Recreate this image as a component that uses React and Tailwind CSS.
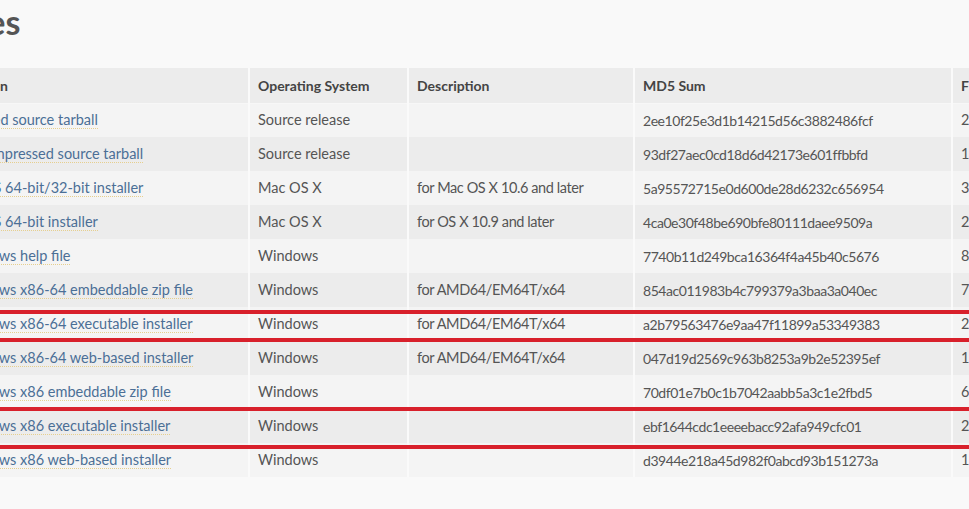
import React from 'react';

const rows = [
    ['Gzipped source tarball', 'Source release', '', '2ee10f25e3d1b14215d56c3882486fcf', '22973527'],
    ['XZ compressed source tarball', 'Source release', '', '93df27aec0cd18d6d42173e601ffbbfd', '17108364'],
    ['macOS 64-bit/32-bit installer', 'Mac OS X', 'for Mac OS X 10.6 and later', '5a95572715e0d600de28d6232c656954', '34898416'],
    ['macOS 64-bit installer', 'Mac OS X', 'for OS X 10.9 and later', '4ca0e30f48be690bfe80111daee9509a', '27766090'],
    ['Windows help file', 'Windows', '', '7740b11d249bca16364f4a45b40c5676', '8092052'],
    ['Windows x86-64 embeddable zip file', 'Windows', 'for AMD64/EM64T/x64', '854ac011983b4c799379a3baa3a040ec', '7018568'],
    ['Windows x86-64 executable installer', 'Windows', 'for AMD64/EM64T/x64', 'a2b79563476e9aa47f11899a53349383', '26190920'],
    ['Windows x86-64 web-based installer', 'Windows', 'for AMD64/EM64T/x64', '047d19d2569c963b8253a9b2e52395ef', '1362904'],
    ['Windows x86 embeddable zip file', 'Windows', '', '70df01e7b0c1b7042aabb5a3c1e2fbd5', '6526486'],
    ['Windows x86 executable installer', 'Windows', '', 'ebf1644cdc1eeeebacc92afa949cfc01', '25424128'],
    ['Windows x86 web-based installer', 'Windows', '', 'd3944e218a45d982f0abcd93b151273a', '1324632'],
];

// hand-drawn highlight marks over the screenshot
const marks = [310, 338, 407, 445];

export default function App() {
    return (
        <div className="relative w-full h-[509px] overflow-hidden bg-[#f9f9f9] font-['Lato','Liberation_Sans',sans-serif]">
            <h1 className="-ml-[49px] pt-[2px] text-[34px] leading-[40px] font-bold text-[#555]">Files</h1>

            <table className="mt-[26px] -ml-[52px] table-fixed border-collapse text-[14.5px] w-[1100px]">
                <colgroup>
                    <col className="w-[301px]" />
                    <col className="w-[159px]" />
                    <col className="w-[226px]" />
                    <col className="w-[318px]" />
                    <col className="w-[96px]" />
                </colgroup>
                <thead>
                    <tr className="h-[35px] bg-[#ececec] text-left text-[14px] text-[#444] border-b border-[#f7f7f7]">
                        <th className="pl-[13px] pr-2 font-bold">Version</th>
                        <th className="px-2 font-bold border-l-2 border-[#fafafa]">Operating System</th>
                        <th className="px-2 font-bold border-l-2 border-[#fafafa]">Description</th>
                        <th className="px-2 font-bold border-l-2 border-[#fafafa]">MD5 Sum</th>
                        <th className="px-2 font-bold border-l-2 border-[#fafafa]">File Size</th>
                    </tr>
                </thead>
                <tbody className="text-[#555]">
                    {rows.map((r, i) => (
                        <tr key={i} className={i % 2 === 0 ? 'h-[34px] bg-[#f4f4f4]' : 'h-[34px] bg-[#ececec]'}>
                            <td className="px-2 whitespace-nowrap">
                                <a className="text-[#4b6f96] border-b border-dotted border-[#e6cf8e]">{r[0]}</a>
                            </td>
                            <td className="px-2 whitespace-nowrap border-l-2 border-[#fafafa]">{r[1]}</td>
                            <td className="px-2 whitespace-nowrap border-l-2 border-[#fafafa] tracking-[-0.4px]">{r[2]}</td>
                            <td className="px-2 whitespace-nowrap border-l-2 border-[#fafafa] text-[14px] tracking-[-0.45px]">{r[3]}</td>
                            <td className="px-2 whitespace-nowrap border-l-2 border-[#fafafa]">{r[4]}</td>
                        </tr>
                    ))}
                </tbody>
            </table>

            {marks.map((top) => (
                <div key={top} className="absolute left-0 right-0 h-[4px] bg-[#d8202b]" style={{ top }} />
            ))}
        </div>
    );
}
